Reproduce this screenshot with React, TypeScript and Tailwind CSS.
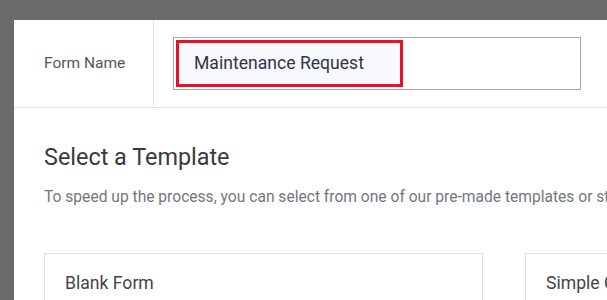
import React from "react";

const App: React.FC = () => {
  return (
    <div
      className="h-[300px] w-[607px] overflow-hidden bg-[#6a6a6a] pl-[14px] pt-[20px]"
      style={{ fontFamily: "Roboto, 'Liberation Sans', sans-serif" }}
    >
      <div className="h-[280px] w-[620px] bg-white">
        {/* form name row */}
        <div className="flex h-[88px] border-b border-[#e3e3e3]">
          <div className="flex w-[140px] items-center border-r border-[#e3e3e3] pl-[30px] text-[15.5px] text-[#555]">
            Form Name
          </div>
          <div className="flex items-center pl-[19px]">
            <div className="h-[53px] w-[408px] border border-[#a9a9a9] p-[2px]">
              <div className="flex h-full w-[227px] items-center whitespace-nowrap border-[3px] border-[#e8112d] bg-[#f8f8ff] pl-[15px] text-[17.6px] text-[#2f3542]">
                Maintenance Request
              </div>
            </div>
          </div>
        </div>

        {/* template selection */}
        <div className="pl-[30px] pt-[35px]">
          <h2 className="text-[23.4px] leading-[28px] text-[#3a3a3a]">
            Select a Template
          </h2>
          <p className="mt-[16px] whitespace-nowrap text-[15.6px] leading-[20px] text-[#737780]">
            To speed up the process, you can select from one of our pre-made
            templates or start with a blank form.
          </p>
          <div className="mt-[46px] flex gap-[42px]">
            <div className="h-[80px] w-[439px] shrink-0 border border-[#e0e0e0] pl-[20px] pt-[16px] text-[17.6px] text-[#444]">
              Blank Form
            </div>
            <div className="h-[80px] w-[300px] shrink-0 border border-[#e0e0e0] pl-[20px] pt-[16px] text-[17.6px] text-[#444]">
              Simple Contact Form
            </div>
          </div>
        </div>
      </div>
    </div>
  );
};

export default App;
